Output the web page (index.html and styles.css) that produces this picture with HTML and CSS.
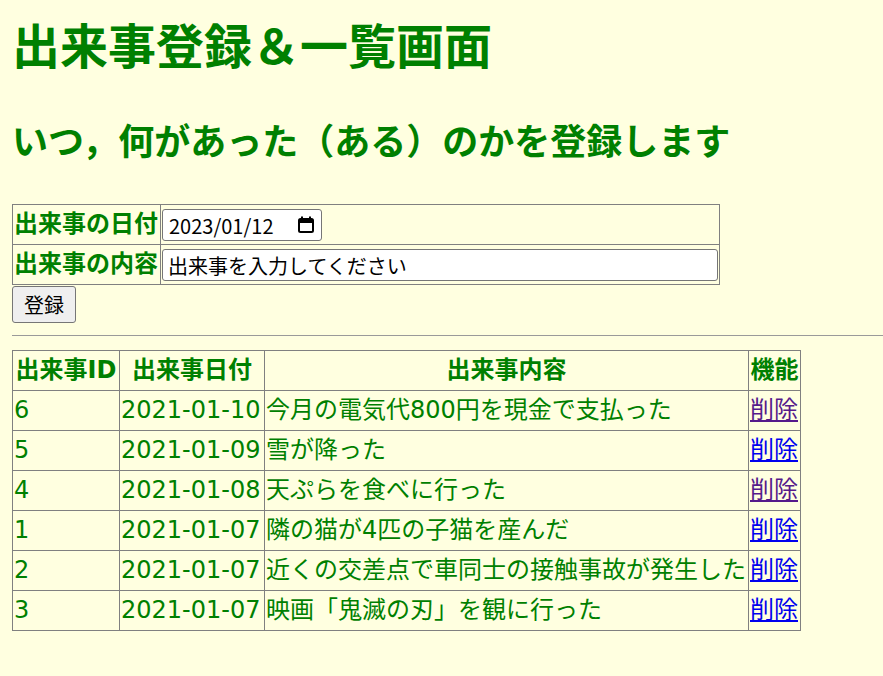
FILE: index.html
```html
<!DOCTYPE html>
<html lang="ja">
<head>
  <meta charset="utf-8">
  <title>出来事登録＆一覧画面</title>
  <link rel="stylesheet" href="styles.css">
</head>
<body>
  <h1 class="page-title">出来事登録＆一覧画面</h1>
  <h2 class="page-lead">いつ，何があった（ある）のかを登録します</h2>

  <form class="entry-form">
    <table class="form-table">
      <tr>
        <th>出来事の日付</th>
        <td>
          <span class="date-field">
            <input type="text" class="date-input" value="2023/01/12">
            <svg class="calendar-icon" width="16" height="17" viewBox="0 0 16 17">
              <rect x="3" y="0.5" width="2" height="3" fill="#000"/>
              <rect x="11" y="0.5" width="2" height="3" fill="#000"/>
              <rect x="1" y="3" width="14" height="13" rx="1.5" fill="none" stroke="#000" stroke-width="2"/>
              <rect x="1" y="3" width="14" height="4" fill="#000"/>
            </svg>
          </span>
        </td>
      </tr>
      <tr>
        <th>出来事の内容</th>
        <td><input type="text" class="text-input" value="出来事を入力してください"></td>
      </tr>
    </table>
    <button type="button" class="submit-button">登録</button>
  </form>

  <hr class="divider">

  <table class="event-table">
    <tr>
      <th class="col-id">出来事ID</th>
      <th class="col-date">出来事日付</th>
      <th class="col-text">出来事内容</th>
      <th class="col-action">機能</th>
    </tr>
    <tr>
      <td>6</td>
      <td>2021-01-10</td>
      <td>今月の電気代800円を現金で支払った</td>
      <td><a href="#" class="visited">削除</a></td>
    </tr>
    <tr>
      <td>5</td>
      <td>2021-01-09</td>
      <td>雪が降った</td>
      <td><a href="#">削除</a></td>
    </tr>
    <tr>
      <td>4</td>
      <td>2021-01-08</td>
      <td>天ぷらを食べに行った</td>
      <td><a href="#" class="visited">削除</a></td>
    </tr>
    <tr>
      <td>1</td>
      <td>2021-01-07</td>
      <td>隣の猫が4匹の子猫を産んだ</td>
      <td><a href="#">削除</a></td>
    </tr>
    <tr>
      <td>2</td>
      <td>2021-01-07</td>
      <td>近くの交差点で車同士の接触事故が発生した</td>
      <td><a href="#">削除</a></td>
    </tr>
    <tr>
      <td>3</td>
      <td>2021-01-07</td>
      <td>映画「鬼滅の刃」を観に行った</td>
      <td><a href="#">削除</a></td>
    </tr>
  </table>
</body>
</html>
```

FILE: styles.css
```css
body {
    margin: 0;
    padding: 0 0 0 12px;
    background-color: #ffffe0;
    color: #008000;
    font-family: "DejaVu Sans", "Noto Sans CJK JP", sans-serif;
    font-size: 24px;
}

.page-title {
    font-size: 48px;
    line-height: 54px;
    margin: 20px 0 0 0;
}

.page-lead {
    font-size: 36px;
    line-height: 44px;
    margin: 47px 0 0 0;
}

.entry-form {
    margin-top: 39px;
}

table {
    border-collapse: collapse;
}

th,
td {
    border: 1px solid #808080;
    padding: 1px;
    line-height: 37px;
    white-space: nowrap;
}

.form-table th {
    text-align: left;
    width: 145px;
}

.date-field {
    position: relative;
    display: inline-block;
    vertical-align: middle;
    width: 160px;
    height: 32px;
}

.calendar-icon {
    position: absolute;
    top: 7px;
    right: 8px;
}

.date-input,
.text-input {
    box-sizing: border-box;
    height: 32px;
    border: 1px solid #767676;
    border-radius: 3px;
    background: #fff;
    color: #000;
    font-size: 20px;
    font-family: "Noto Sans CJK JP", sans-serif;
    vertical-align: middle;
    margin: 0;
    outline: none;
}

.date-input {
    display: block;
    width: 160px;
    padding: 0 6px;
}

.text-input {
    width: 556px;
    padding: 0 5px;
}

.submit-button {
    display: block;
    margin-top: 1px;
    height: 37px;
    padding: 0 11px;
    border: 1px solid #767676;
    border-radius: 3px;
    background-color: #efefef;
    color: #000;
    font-size: 20px;
    font-family: "Noto Sans CJK JP", sans-serif;
}

.divider {
    height: 0;
    border: none;
    border-top: 1px solid #9a9a9a;
    margin: 12px 0 14px 0;
}

.event-table td {
    text-align: left;
}

.col-id {
    width: 104px;
}

.col-date {
    width: 142px;
}

.col-text {
    width: 481px;
}

.col-action {
    width: 49px;
}

.event-table a {
    color: #0000ee;
}

.event-table a.visited {
    color: #551a8b;
}
```
